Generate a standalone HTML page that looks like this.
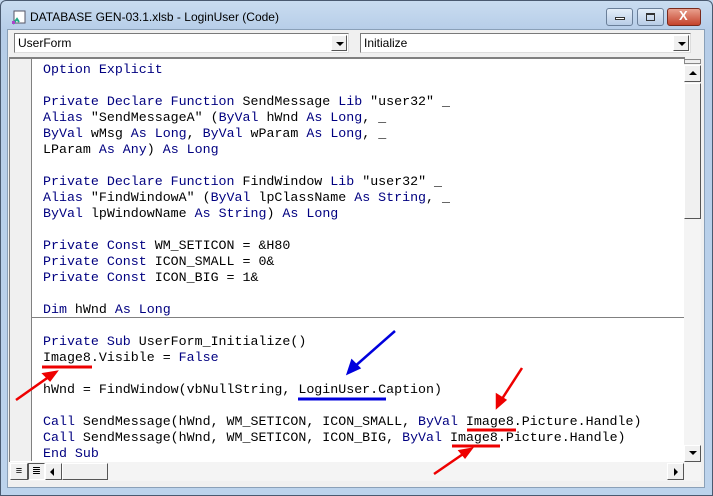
<!DOCTYPE html><html><head><style>
*{margin:0;padding:0;box-sizing:border-box}
body{width:713px;height:496px;overflow:hidden;background:#c4d8ee;font-family:"Liberation Sans",sans-serif;position:relative}
.a{position:absolute}
.frame{left:0;top:0;width:713px;height:496px;border:1px solid #4a5a70;border-radius:6px 6px 0 0;background:linear-gradient(#c9dcf0,#b6cde8 30px,#bcd3ec)}
.inner{left:7px;top:29px;width:698px;height:459px;background:#f0f0f0;border:1px solid #8aa0b8}
.combo{height:20px;background:#fff;border:1px solid #7a7a7a;border-right-color:#ddd;border-bottom-color:#ddd;font-size:12px;padding:2px 3px;font-family:"Liberation Sans",sans-serif}
.dd{position:absolute;right:1px;top:1px;width:16px;height:16px;background:#f0f0f0;border:1px solid #fff;border-right-color:#555;border-bottom-color:#555}
.dd:after{content:"";position:absolute;left:4px;top:6px;border-left:4px solid transparent;border-right:4px solid transparent;border-top:4px solid #000}
.code{left:9px;top:57px;width:676px;height:405px;background:#fff;border-top:2px solid #808080;border-left:1px solid #808080}
.gut{left:10px;top:59px;width:22px;height:402px;background:#f0f0f0;border-right:1px solid #808080}
pre{position:absolute;left:43px;top:62px;font-family:"Liberation Mono",monospace;font-size:13.3px;line-height:16px;color:#000}
.k{color:#000080}
.btn{position:absolute;top:8px;height:18px;border:1px solid #6a7f99;border-radius:3px;background:linear-gradient(#e4eef9,#b8cde6)}
</style></head><body>
<div class="a frame"></div>
<svg class="a" style="left:11px;top:10px" width="16" height="16"><rect x="3" y="1" width="11" height="12" fill="#fff" stroke="#556"/><path d="M2 14l4-5 2 3" stroke="#2a8" stroke-width="2" fill="none"/><rect x="1" y="11" width="3" height="3" fill="#a4c"/></svg>
<div class="a" style="left:30px;top:10px;font-size:12px;color:#000">DATABASE GEN-03.1.xlsb - LoginUser (Code)</div>
<div class="btn" style="left:606px;width:27px"><div class="a" style="left:8px;top:8px;width:10px;height:3px;border:1px solid #333;background:#fff"></div></div>
<div class="btn" style="left:637px;width:27px"><div class="a" style="left:8px;top:4px;width:9px;height:8px;border:1px solid #333;border-top-width:2px"></div></div>
<div class="btn" style="left:667px;width:34px;background:linear-gradient(#e9a08e,#c4432c);border-color:#7a2a1c"><div class="a" style="left:11px;top:-1px;color:#fff;font-weight:bold;font-size:13px">X</div></div>
<div class="a inner"></div>
<div class="a combo" style="left:14px;top:33px;width:335px">UserForm<div class="dd"></div></div>
<div class="a combo" style="left:360px;top:33px;width:331px">Initialize<div class="dd"></div></div>
<div class="a code"></div>
<div class="a gut"></div>
<div class="a" style="left:32px;top:317px;width:653px;height:1px;background:#808080"></div>
<pre><span class="k">Option Explicit</span>

<span class="k">Private Declare Function</span> SendMessage <span class="k">Lib</span> "user32" _
<span class="k">Alias</span> "SendMessageA" (<span class="k">ByVal</span> hWnd <span class="k">As Long</span>, _
<span class="k">ByVal</span> wMsg <span class="k">As Long</span>, <span class="k">ByVal</span> wParam <span class="k">As Long</span>, _
LParam <span class="k">As Any</span>) <span class="k">As Long</span>

<span class="k">Private Declare Function</span> FindWindow <span class="k">Lib</span> "user32" _
<span class="k">Alias</span> "FindWindowA" (<span class="k">ByVal</span> lpClassName <span class="k">As String</span>, _
<span class="k">ByVal</span> lpWindowName <span class="k">As String</span>) <span class="k">As Long</span>

<span class="k">Private Const</span> WM_SETICON = &amp;H80
<span class="k">Private Const</span> ICON_SMALL = 0&amp;
<span class="k">Private Const</span> ICON_BIG = 1&amp;

<span class="k">Dim</span> hWnd <span class="k">As Long</span>

<span class="k">Private Sub</span> UserForm_Initialize()
Image8.Visible = <span class="k">False</span>

hWnd = FindWindow(vbNullString, LoginUser.Caption)

<span class="k">Call</span> SendMessage(hWnd, WM_SETICON, ICON_SMALL, <span class="k">ByVal</span> Image8.Picture.Handle)
<span class="k">Call</span> SendMessage(hWnd, WM_SETICON, ICON_BIG, <span class="k">ByVal</span> Image8.Picture.Handle)
<span class="k">End Sub</span></pre>
<div class="a" style="left:684px;top:59px;width:17px;height:403px;background:#f4f4f4"></div>
<div class="a" style="left:684px;top:59px;width:17px;height:5px;border:1px solid #888;background:#eee"></div>
<div class="a" style="left:684px;top:65px;width:17px;height:17px;border:1px solid #fff;border-right-color:#555;border-bottom-color:#555;background:#f0f0f0"><div class="a" style="left:4px;top:5px;border-left:4px solid transparent;border-right:4px solid transparent;border-bottom:4px solid #000"></div></div>
<div class="a" style="left:684px;top:83px;width:17px;height:136px;border:1px solid #fff;border-right-color:#555;border-bottom-color:#555;background:#f0f0f0"></div>
<div class="a" style="left:684px;top:445px;width:17px;height:17px;border:1px solid #fff;border-right-color:#555;border-bottom-color:#555;background:#f0f0f0"><div class="a" style="left:4px;top:5px;border-left:4px solid transparent;border-right:4px solid transparent;border-top:4px solid #000"></div></div>
<div class="a" style="left:9px;top:462px;width:692px;height:19px;background:#f4f4f4"></div>
<div class="a" style="left:10px;top:463px;width:18px;height:17px;border:1px solid #fff;border-right-color:#555;border-bottom-color:#555;background:#f0f0f0;font-size:11px;text-align:center;line-height:14px">≡</div>
<div class="a" style="left:28px;top:463px;width:17px;height:17px;border:1px solid #555;border-right-color:#fff;border-bottom-color:#fff;background:#f0f0f0;font-size:11px;text-align:center;line-height:14px">≣</div>
<div class="a" style="left:45px;top:463px;width:17px;height:17px;border:1px solid #fff;border-right-color:#555;border-bottom-color:#555;background:#f0f0f0"><div class="a" style="left:4px;top:4px;border-top:4px solid transparent;border-bottom:4px solid transparent;border-right:4px solid #000"></div></div>
<div class="a" style="left:62px;top:463px;width:46px;height:17px;border:1px solid #fff;border-right-color:#555;border-bottom-color:#555;background:#f0f0f0"></div>
<div class="a" style="left:667px;top:463px;width:17px;height:17px;border:1px solid #fff;border-right-color:#555;border-bottom-color:#555;background:#f0f0f0"><div class="a" style="left:6px;top:4px;border-top:4px solid transparent;border-bottom:4px solid transparent;border-left:4px solid #000"></div></div>
<svg class="a" style="left:0;top:0" width="713" height="496">
<g stroke-width="3" fill="none">
<path d="M42 367H92" stroke="#e00"/>
<path d="M298 399H386" stroke="#00d"/>
<path d="M467 430H516" stroke="#e00"/>
<path d="M452 446H500" stroke="#e00"/>
</g>
<g stroke-width="2.5">
<path d="M16 400L50 376" stroke="#e00"/><path d="M56 372l-12 2 6 6z" fill="#e00" stroke="#e00"/>
<path d="M395 331L353 368" stroke="#00d"/><path d="M348 373l4-12 7 7z" fill="#00d" stroke="#00d"/>
<path d="M522 368L500 402" stroke="#e00"/><path d="M497 407l0-12 8 5z" fill="#e00" stroke="#e00"/>
<path d="M434 474L466 452" stroke="#e00"/><path d="M471 449l-11 2 5 6z" fill="#e00" stroke="#e00"/>
</g></svg>
</body></html>
